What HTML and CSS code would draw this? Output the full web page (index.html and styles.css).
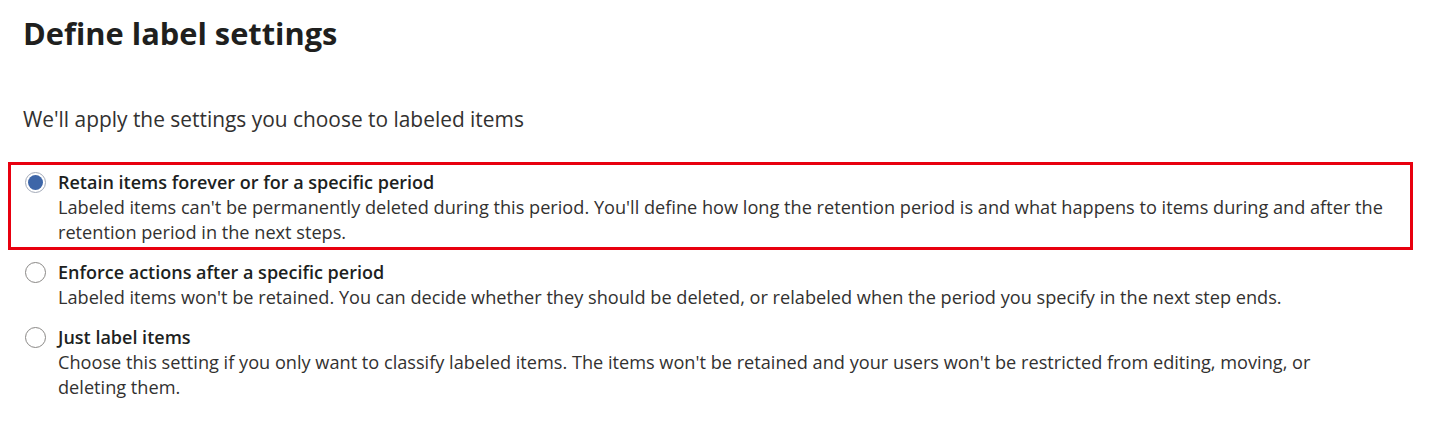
FILE: index.html
```html
<!DOCTYPE html>
<html lang="en">
<head>
<meta charset="utf-8">
<title>Define label settings</title>
<link rel="stylesheet" href="styles.css">
</head>
<body>
<main class="page">
  <h1 class="title">Define label settings</h1>
  <p class="subtitle">We'll apply the settings you choose to labeled items</p>
  <div class="options" role="radiogroup">
    <div class="option selected" role="radio" aria-checked="true">
      <span class="radio"><span class="dot"></span></span>
      <div class="option-text">
        <div class="option-title">Retain items forever or for a specific period</div>
        <div class="option-desc">Labeled items can't be permanently deleted during this period. You'll define how long the retention period is and what happens to items during and after the retention period in the next steps.</div>
      </div>
    </div>
    <div class="option" role="radio" aria-checked="false">
      <span class="radio"></span>
      <div class="option-text">
        <div class="option-title">Enforce actions after a specific period</div>
        <div class="option-desc">Labeled items won't be retained. You can decide whether they should be deleted, or relabeled when the period you specify in the next step ends.</div>
      </div>
    </div>
    <div class="option" role="radio" aria-checked="false">
      <span class="radio"></span>
      <div class="option-text">
        <div class="option-title">Just label items</div>
        <div class="option-desc">Choose this setting if you only want to classify labeled items. The items won't be retained and your users won't be restricted from editing, moving, or<br>deleting them.</div>
      </div>
    </div>
  </div>
</main>
</body>
</html>
```
FILE: styles.css
```css
html, body {
  margin: 0;
  padding: 0;
  background: #ffffff;
}

body {
  font-family: "Open Sans", "Noto Sans", sans-serif;
  color: #323130;
}

.page {
  display: flex;
  flex-direction: column;
  padding-top: 12px;
}

.title {
  margin: 0 0 0 23px;
  font-size: 30.8px;
  line-height: 42px;
  font-weight: 700;
  color: #201f1e;
}

.subtitle {
  margin: 51px 0 0 23px;
  font-size: 20.9px;
  line-height: 28px;
  font-weight: 400;
  color: #323130;
}

.options {
  display: flex;
  flex-direction: column;
  gap: 2px;
  margin: 29px 0 0 8px;
  width: 1405px;
}

.option {
  display: flex;
  align-items: flex-start;
  gap: 12px;
  padding: 4px 14px 2px 14px;
  border: 3px solid transparent;
}

.option.selected {
  border-color: #e8000f;
}

.radio {
  flex: none;
  box-sizing: border-box;
  width: 21px;
  height: 21px;
  margin-top: 2.5px;
  border: 1px solid #8a8886;
  border-radius: 50%;
  display: flex;
  align-items: center;
  justify-content: center;
  background: #ffffff;
}

.option.selected .radio {
  border-color: #a3aab8;
}

.dot {
  width: 15px;
  height: 15px;
  border-radius: 50%;
  background: #3e66a8;
}

.option-text {
  display: flex;
  flex-direction: column;
  min-width: 0;
}

.option-title {
  font-size: 18px;
  line-height: 26px;
  font-weight: 600;
  color: #201f1e;
}

.option-desc {
  font-size: 18.17px;
  line-height: 25px;
  font-weight: 400;
  color: #323130;
}
```
